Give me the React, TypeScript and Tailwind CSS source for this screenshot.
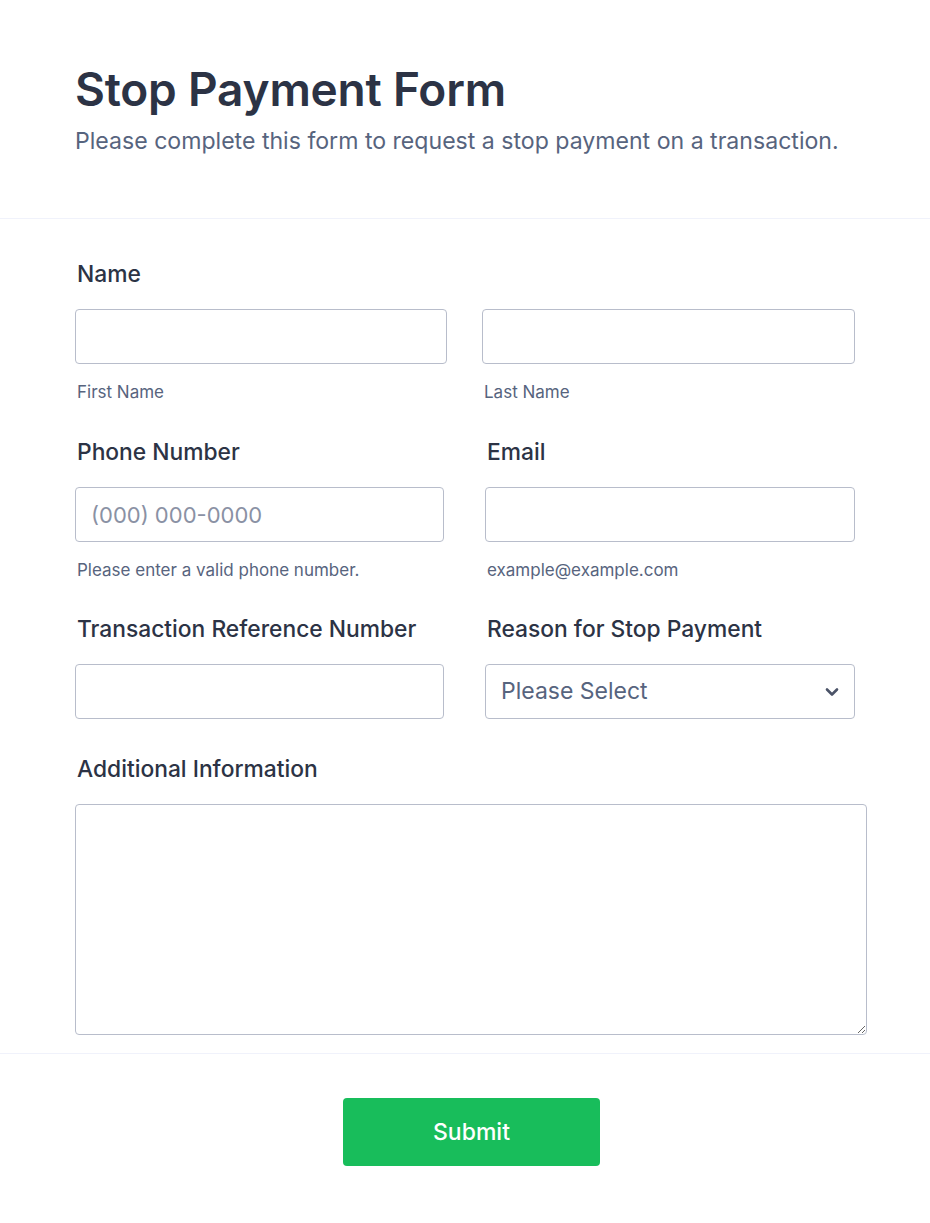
const font = { fontFamily: "Inter, 'Noto Sans', sans-serif" };

function Label({ children }: { children: React.ReactNode }) {
  return (
    <div className="pl-[2px] text-[22.8px] leading-7 font-medium text-[#2c3345]">
      {children}
    </div>
  );
}

function Sub({ children }: { children: React.ReactNode }) {
  return (
    <div className="mt-[18px] pl-[2px] text-[17px] leading-5 text-[#57647e]">
      {children}
    </div>
  );
}

function Box({ placeholder }: { placeholder?: string }) {
  return (
    <input
      placeholder={placeholder}
      className="mt-[21px] block h-[55px] w-full rounded-[4px] border border-[#b8bdcb] bg-white px-[15px] text-[22px] text-[#2c3345] placeholder:text-[#8a91a4] outline-none"
    />
  );
}

export default function App() {
  return (
    <div className="min-h-screen w-[930px] bg-white" style={font}>
      <header className="px-[75px] pt-[62px] pb-[62px] border-b border-[#f0f2fb]">
        <h1 className="text-[46px] leading-[55px] font-semibold text-[#2c3345] tracking-[-0.2px]">
          Stop Payment Form
        </h1>
        <p className="mt-[9px] text-[23.1px] leading-[30px] text-[#57647e]">
          Please complete this form to request a stop payment on a transaction.
        </p>
      </header>

      <form className="px-[75px] pt-[41px] pb-[18px] border-b border-[#f0f2fb]">
        <Label>Name</Label>
        <div className="grid grid-cols-[372px_373px] gap-x-[35px]">
          <div>
            <Box />
            <Sub>First Name</Sub>
          </div>
          <div>
            <Box />
            <Sub>Last Name</Sub>
          </div>
        </div>

        <div className="mt-[36px] grid grid-cols-[369px_370px] gap-x-[41px]">
          <div>
            <Label>Phone Number</Label>
            <Box placeholder="(000) 000-0000" />
            <Sub>Please enter a valid phone number.</Sub>
          </div>
          <div>
            <Label>Email</Label>
            <Box />
            <Sub>example@example.com</Sub>
          </div>
        </div>

        <div className="mt-[35px] grid grid-cols-[369px_370px] gap-x-[41px]">
          <div>
            <Label>Transaction Reference Number</Label>
            <Box />
          </div>
          <div>
            <Label>Reason for Stop Payment</Label>
            <div className="relative mt-[21px] flex h-[55px] items-center rounded-[4px] border border-[#b8bdcb] bg-white px-[15px] text-[23px] text-[#57647e]">
              Please Select
              <svg
                className="absolute right-[15px] top-1/2 -translate-y-1/2"
                width="14"
                height="10"
                viewBox="0 0 14 10"
                fill="none"
              >
                <path
                  d="M2 2.5L7 7.5L12 2.5"
                  stroke="#4b5368"
                  strokeWidth="2.6"
                  strokeLinecap="round"
                  strokeLinejoin="round"
                />
              </svg>
            </div>
          </div>
        </div>

        <div className="mt-[36px]">
          <Label>Additional Information</Label>
          <textarea className="mt-[21px] block h-[231px] w-[792px] rounded-[4px] border border-[#b8bdcb] bg-white p-3 text-[20px] outline-none" />
        </div>
      </form>

      <div className="flex justify-center pl-[13px] pt-[44px] pb-[57px]">
        <button className="h-[68px] w-[257px] rounded-[4px] bg-[#18bd5b] text-[23px] font-medium text-white">
          Submit
        </button>
      </div>
    </div>
  );
}
